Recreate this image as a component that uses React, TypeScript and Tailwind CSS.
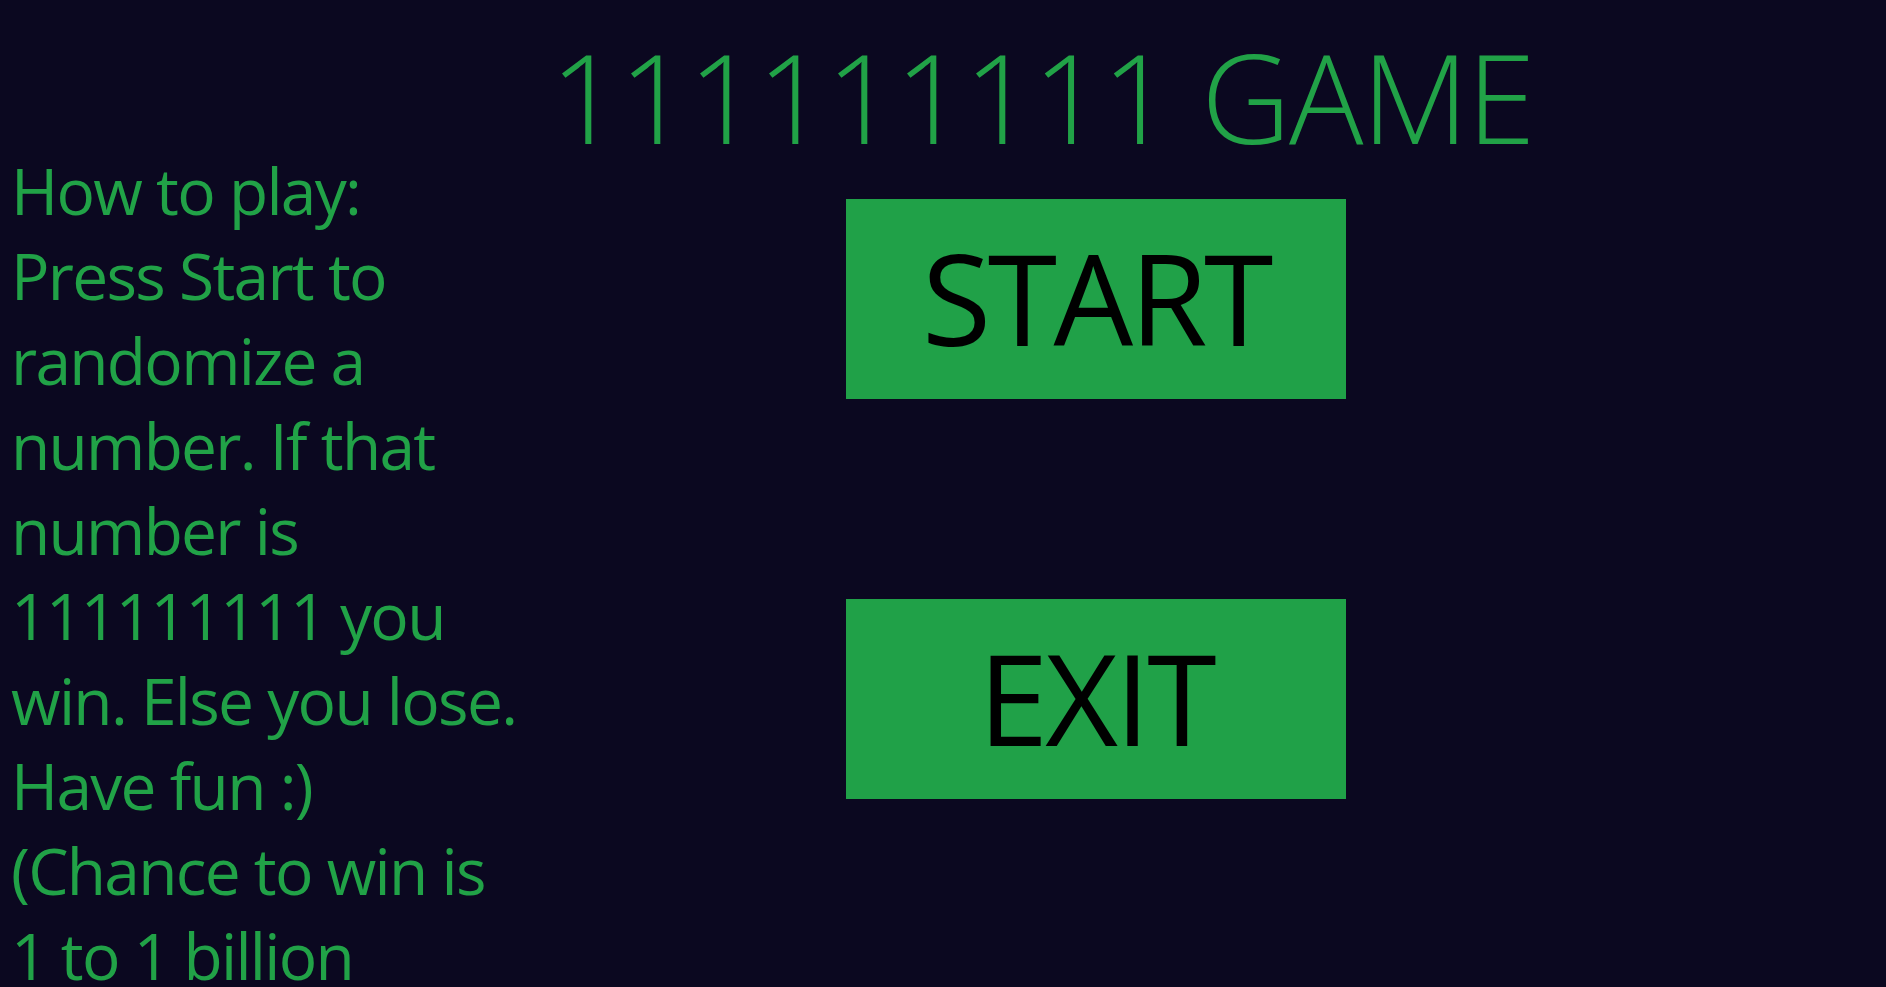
import React from "react";

const lines = [
  "How to play:",
  "Press Start to",
  "randomize a",
  "number. If that",
  "number is",
  "111111111 you",
  "win. Else you lose.",
  "Have fun :)",
  "(Chance to win is",
  "1 to 1 billion",
];

export default function App() {
  return (
    <div
      className="w-[1886px] h-[987px] overflow-hidden bg-[#0b0820] flex flex-row"
      style={{ fontFamily: '"Open Sans", "Noto Sans", sans-serif' }}
    >
      <div className="w-[540px] shrink-0 pl-[11px] pt-[148px] text-[64px] leading-[85px] tracking-[-1.7px] text-[#21a247] whitespace-nowrap">
        {lines.map((l) => (
          <div key={l}>{l}</div>
        ))}
      </div>
      <div className="flex-1 flex flex-col">
        <h1 className="mt-[34px] ml-[10px] text-[124px] leading-none font-light tracking-[-1.8px] text-[#21a247] whitespace-nowrap">
          111111111 GAME
        </h1>
        <button className="mt-[41px] ml-[306px] w-[500px] h-[200px] bg-[#20a148] text-black text-[126px] leading-none tracking-[-3.5px] flex items-center justify-center pb-[4px]">
          START
        </button>
        <button className="mt-[200px] ml-[306px] w-[500px] h-[200px] bg-[#20a148] text-black text-[126px] leading-none tracking-[-3px] flex items-center justify-center pb-[4px]">
          EXIT
        </button>
      </div>
    </div>
  );
}
